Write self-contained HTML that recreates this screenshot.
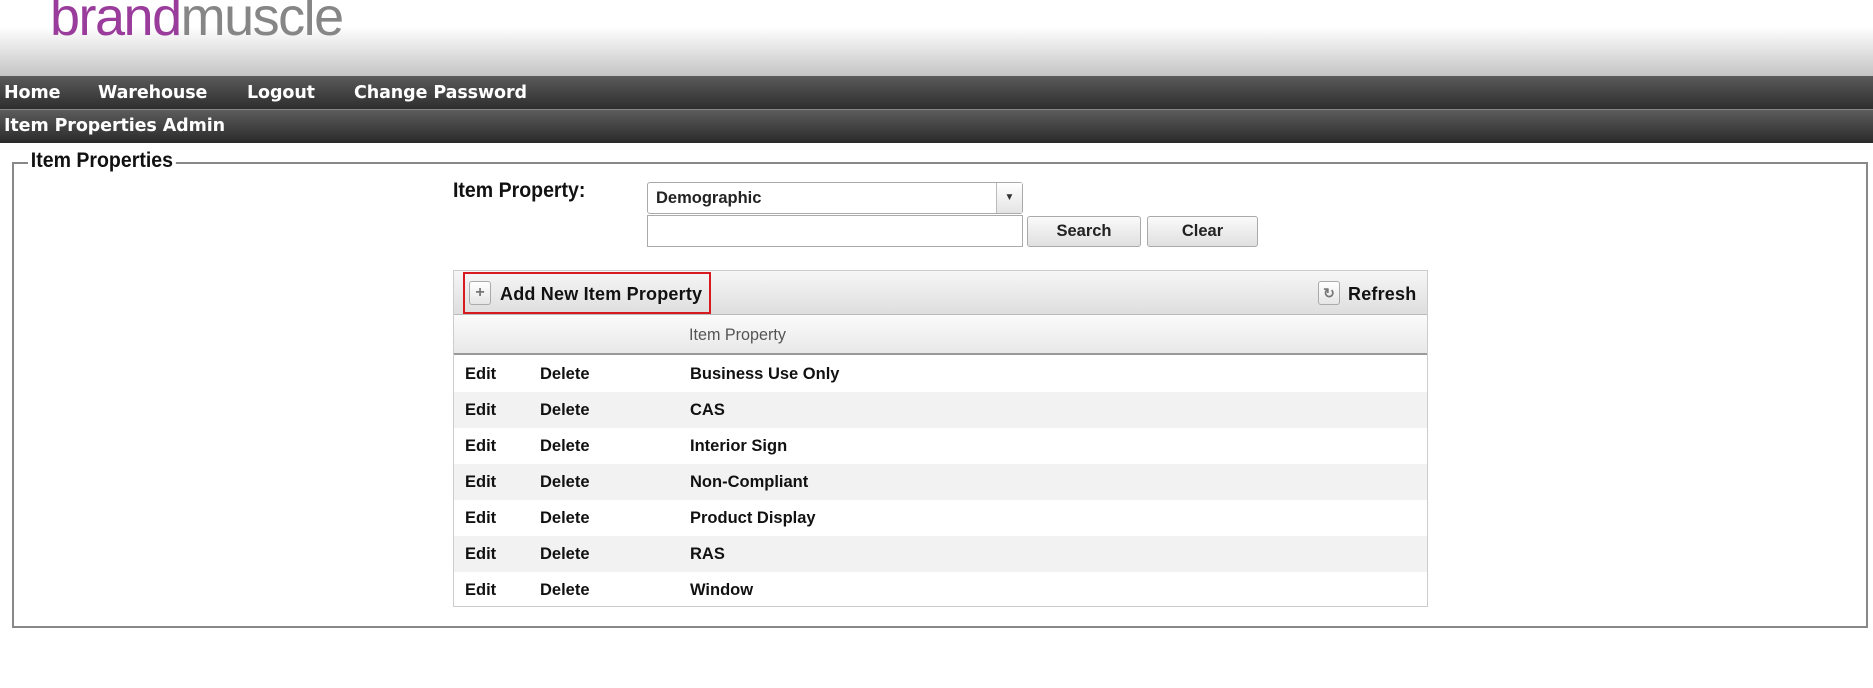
<!DOCTYPE html>
<html><head><style>
*{margin:0;padding:0;box-sizing:border-box}
body{width:1873px;height:688px;background:#fff;font-family:"Liberation Sans",sans-serif;position:relative;overflow:hidden}
.hdr{position:absolute;left:0;top:0;width:1873px;height:76px;background:linear-gradient(#fff 0%,#fff 35%,#c4c4c4 100%)}
.logo{position:absolute;left:50px;top:-14px;font-size:54px;letter-spacing:-1.5px;font-family:"Liberation Sans",sans-serif}
.logo .b{color:#9a3c9b}.logo .m{color:#868686}
.nav{position:absolute;left:0;top:76px;width:1873px;height:34px;background:linear-gradient(#5a5a5a,#2e2e2e);border-bottom:1px solid #888}
.sub{position:absolute;left:0;top:110px;width:1873px;height:33px;background:linear-gradient(#5c5c5c,#2a2a2a)}
.nav span,.sub span{position:absolute;color:#fff;font-family:"DejaVu Sans",sans-serif;font-weight:bold;font-size:17.5px;top:7px;letter-spacing:-0.1px}
.fs{position:absolute;left:12px;top:162px;width:1856px;height:2px;background:#888}
.fsl{position:absolute;left:12px;top:162px;width:2px;height:466px;background:#888}
.fsr{position:absolute;left:1866px;top:162px;width:2px;height:466px;background:#888}
.fsb{position:absolute;left:12px;top:626px;width:1856px;height:2px;background:#888}
.leg{position:absolute;left:28px;top:149px;background:#fff;padding:0 3px;font-size:21px;font-weight:bold;transform:scaleX(.93);transform-origin:left;color:#111}
.lbl{position:absolute;left:453px;top:179px;font-size:21px;font-weight:bold;transform:scaleX(.93);transform-origin:left;color:#111}
.sel{position:absolute;left:647px;top:182px;width:376px;height:32px;border:1px solid #aaa;border-radius:3px;background:#fff;font-weight:bold;font-size:16.5px;padding:6px 8px;color:#222}
.sel .arr{position:absolute;right:0;top:0;width:26px;height:30px;border-left:1px solid #bbb;background:linear-gradient(#fff,#e4e4e4);font-size:10px;text-align:center;line-height:30px;color:#333}
.txt{position:absolute;left:647px;top:215px;width:376px;height:32px;border:1px solid #aaa;background:#fff}
.btn{position:absolute;top:216px;height:31px;border:1px solid #aaa;border-radius:3px;background:linear-gradient(#fafafa,#e0e0e0);font-weight:bold;font-size:16.5px;text-align:center;line-height:29px;color:#222}
.grid{position:absolute;left:453px;top:270px;width:975px;height:337px;border:1px solid #ccc}
.tb{position:absolute;left:0;top:0;width:973px;height:44px;background:linear-gradient(#f6f6f6,#dedede);border-bottom:1px solid #bbb}
.add{position:absolute;left:9px;top:1px;width:248px;height:42px;border:2px solid #d71920}
.ico{position:absolute;width:22px;height:24px;border:1px solid #aaa;border-radius:3px;background:linear-gradient(#fff,#e6e6e6);color:#777;font-weight:bold;text-align:center;line-height:22px;font-size:16px}
.tbt{position:absolute;font-weight:bold;font-size:18px;color:#111;top:13px;letter-spacing:.2px}
.th{position:absolute;left:0;top:44px;width:973px;height:40px;background:linear-gradient(#fbfbfb,#e8e8e8);border-bottom:2px solid #999}
.th span{position:absolute;left:235px;top:10px;font-size:17px;color:#555;transform:scaleX(.95);transform-origin:left}
.row{position:absolute;left:0;width:973px;height:36px;font-weight:bold;font-size:16.5px;color:#111}
.row span{position:absolute;top:9px}
.alt{background:#f2f2f2}
</style></head><body>
<div class="hdr"><div class="logo"><span class="b">brand</span><span class="m">muscle</span></div></div>
<div class="nav"><span style="left:4px">Home</span><span style="left:98px">Warehouse</span><span style="left:247px">Logout</span><span style="left:354px">Change Password</span></div>
<div class="sub"><span style="left:4px;top:6px">Item Properties Admin</span></div>
<div class="fs"></div><div class="fsl"></div><div class="fsr"></div><div class="fsb"></div>
<div class="leg">Item Properties</div>
<div class="lbl">Item Property:</div>
<div class="sel">Demographic<div class="arr">▼</div></div>
<div class="txt"></div>
<div class="btn" style="left:1027px;width:114px">Search</div>
<div class="btn" style="left:1147px;width:111px">Clear</div>
<div class="grid">
<div class="tb">
<div class="add"></div>
<div class="ico" style="left:15px;top:10px">+</div>
<div class="tbt" style="left:46px">Add New Item Property</div>
<div class="ico" style="left:864px;top:10px;font-size:14px">↻</div>
<div class="tbt" style="left:894px">Refresh</div>
</div>
<div class="th"><span>Item Property</span></div>
<div class="row" style="top:85px"><span style="left:11px">Edit</span><span style="left:86px">Delete</span><span style="left:236px">Business Use Only</span></div>
<div class="row alt" style="top:121px"><span style="left:11px">Edit</span><span style="left:86px">Delete</span><span style="left:236px">CAS</span></div>
<div class="row" style="top:157px"><span style="left:11px">Edit</span><span style="left:86px">Delete</span><span style="left:236px">Interior Sign</span></div>
<div class="row alt" style="top:193px"><span style="left:11px">Edit</span><span style="left:86px">Delete</span><span style="left:236px">Non-Compliant</span></div>
<div class="row" style="top:229px"><span style="left:11px">Edit</span><span style="left:86px">Delete</span><span style="left:236px">Product Display</span></div>
<div class="row alt" style="top:265px"><span style="left:11px">Edit</span><span style="left:86px">Delete</span><span style="left:236px">RAS</span></div>
<div class="row" style="top:301px"><span style="left:11px">Edit</span><span style="left:86px">Delete</span><span style="left:236px">Window</span></div>
</div>
</body></html>
